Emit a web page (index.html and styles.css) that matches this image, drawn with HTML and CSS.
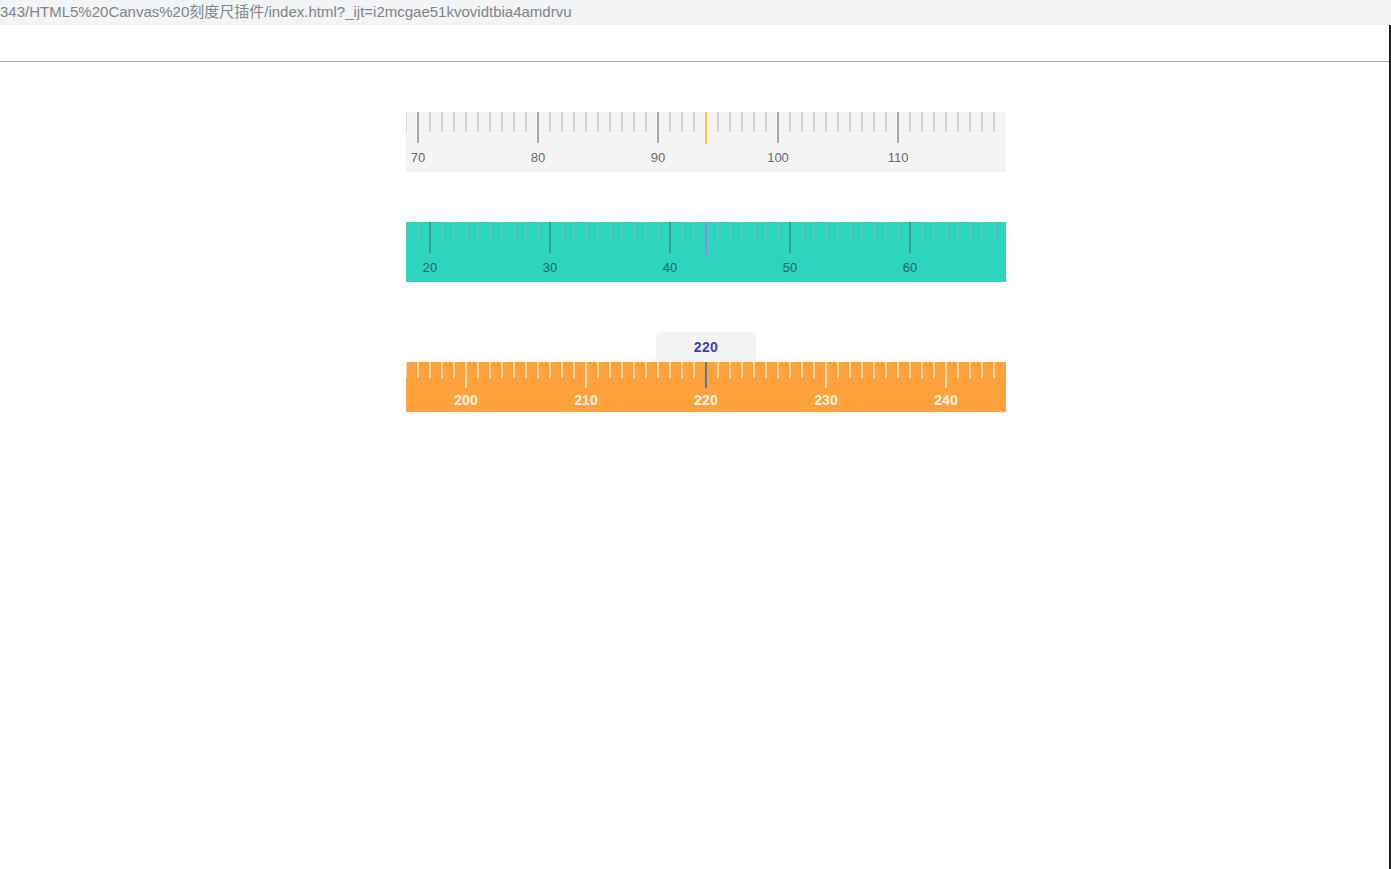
FILE: index.html
```html
<!DOCTYPE html>
<html lang="zh-CN">
<head>
<meta charset="utf-8">
<title>HTML5 Canvas 刻度尺插件</title>
<link rel="stylesheet" href="styles.css">
</head>
<body>
<div class="urlbar">343/HTML5%20Canvas%20刻度尺插件/index.html?_ijt=i2mcgae51kvovidtbia4amdrvu</div>
<div class="frame">
  <div class="toolbar"></div>
  <main class="stack">
    <div class="ruler r1">
      <div class="track">
        <i></i>
        <i class="M"><b>70</b></i><i></i><i></i><i></i><i></i><i></i><i></i><i></i><i></i><i></i>
        <i class="M"><b>80</b></i><i></i><i></i><i></i><i></i><i></i><i></i><i></i><i></i><i></i>
        <i class="M"><b>90</b></i><i></i><i></i><i></i><i></i><i></i><i></i><i></i><i></i><i></i>
        <i class="M"><b>100</b></i><i></i><i></i><i></i><i></i><i></i><i></i><i></i><i></i><i></i>
        <i class="M"><b>110</b></i><i></i><i></i><i></i><i></i><i></i><i></i><i></i><i></i>
      </div>
      <span class="pointer"></span>
    </div>

    <div class="ruler r2">
      <div class="track">
        <i></i><i></i>
        <i class="M"><b>20</b></i><i></i><i></i><i></i><i></i><i></i><i></i><i></i><i></i><i></i>
        <i class="M"><b>30</b></i><i></i><i></i><i></i><i></i><i></i><i></i><i></i><i></i><i></i>
        <i class="M"><b>40</b></i><i></i><i></i><i></i><i></i><i></i><i></i><i></i><i></i><i></i>
        <i class="M"><b>50</b></i><i></i><i></i><i></i><i></i><i></i><i></i><i></i><i></i><i></i>
        <i class="M"><b>60</b></i><i></i><i></i><i></i><i></i><i></i><i></i><i></i>
      </div>
      <span class="pointer"></span>
    </div>

    <div class="group3">
      <div class="bubble">220</div>
      <div class="ruler r3">
        <div class="track">
          <i></i><i></i><i></i><i></i><i></i>
          <i class="M"><b>200</b></i><i></i><i></i><i></i><i></i><i></i><i></i><i></i><i></i><i></i>
          <i class="M"><b>210</b></i><i></i><i></i><i></i><i></i><i></i><i></i><i></i><i></i><i></i>
          <i class="M"><b>220</b></i><i></i><i></i><i></i><i></i><i></i><i></i><i></i><i></i><i></i>
          <i class="M"><b>230</b></i><i></i><i></i><i></i><i></i><i></i><i></i><i></i><i></i><i></i>
          <i class="M"><b>240</b></i><i></i><i></i><i></i><i></i>
        </div>
        <span class="pointer"></span>
      </div>
    </div>
  </main>
</div>
</body>
</html>
```
FILE: styles.css
```css
html, body {
  margin: 0;
  padding: 0;
  background: #ffffff;
}

body {
  font-family: "Liberation Sans", "Noto Sans CJK SC", sans-serif;
  overflow: hidden;
}

.urlbar {
  height: 25px;
  line-height: 23px;
  background: #f1f3f4;
  color: #80868b;
  font-size: 15px;
  white-space: nowrap;
}

.frame {
  height: 844px;
  border-right: 2px solid #202020;
}

.toolbar {
  height: 36px;
  border-bottom: 1px solid #a8a8a8;
}

.stack {
  display: flex;
  flex-direction: column;
  gap: 50px;
  padding: 50px 0 0 406px;
}

.ruler {
  position: relative;
  width: 600px;
  overflow: hidden;
}

.track {
  display: flex;
  margin-left: -6px;
}

.track i {
  flex: 0 0 12px;
  width: 12px;
  min-width: 0;
  display: flex;
  flex-direction: column;
  align-items: center;
  font-style: normal;
}

.track i::before {
  content: "";
  display: block;
  flex: none;
  width: 2px;
  height: var(--minor);
  background: var(--minor-c);
}

.track i.M::before {
  height: var(--major);
  background: var(--major-c);
}

.track b {
  display: block;
  flex: none;
  white-space: nowrap;
  font-size: 13px;
  line-height: 15px;
  font-weight: normal;
  color: var(--label-c);
  margin-top: var(--label-gap);
}

.pointer {
  position: absolute;
  top: 0;
  left: 299px;
  width: 2px;
  height: var(--pointer);
  background: var(--pointer-c);
}

/* ruler 1 : light grey */
.r1 {
  height: 60px;
  background: #f4f4f4;
  --minor: 20px;
  --major: 31px;
  --minor-c: #d4d4d4;
  --major-c: #a9a9a9;
  --label-c: #6a6a6a;
  --label-gap: 7px;
  --pointer: 32px;
  --pointer-c: #f8c537;
}

/* ruler 2 : teal */
.r2 {
  height: 60px;
  background: #2dd5be;
  --minor: 18px;
  --major: 31px;
  --minor-c: #5ccbb9;
  --major-c: #3f9d8f;
  --label-c: #1e6a5e;
  --label-gap: 7px;
  --pointer: 32px;
  --pointer-c: #9b82ee;
}

/* ruler 3 : orange with bubble */
.group3 {
  display: flex;
  flex-direction: column;
}

.bubble {
  width: 100px;
  height: 30px;
  margin-left: 250px;
  background: #f4f4f5;
  border-radius: 5px 5px 0 0;
  color: #3c3fbf;
  font-size: 14px;
  font-weight: bold;
  letter-spacing: 0.3px;
  line-height: 30px;
  text-align: center;
}

.r3 {
  height: 50px;
  background: #ffa23b;
  --minor: 16px;
  --major: 26px;
  --minor-c: #ffd7a0;
  --major-c: #ffe2b8;
  --label-c: #fff4e4;
  --label-gap: 4px;
  --pointer: 26px;
  --pointer-c: #5a7ba8;
}

.r3 .track b {
  font-size: 14px;
  line-height: 16px;
  font-weight: bold;
}
```
